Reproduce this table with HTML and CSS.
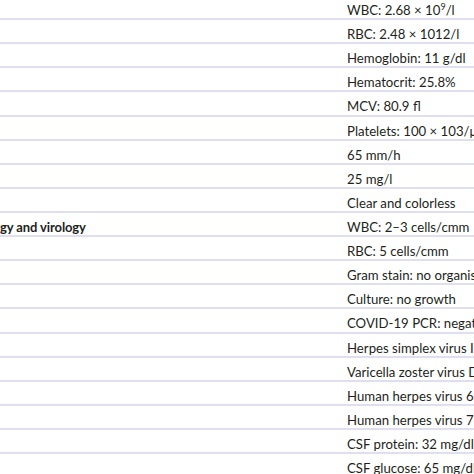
FILE: index.html
```html
<!DOCTYPE html>
<html>
<head>
<meta charset="utf-8">
<link rel="stylesheet" href="styles.css">
</head>
<body>
<div class="table">
  <div class="row"><div class="label"></div><div class="value">WBC: 2.68 × 10<sup>9</sup>/l</div></div>
  <div class="row"><div class="label"></div><div class="value">RBC: 2.48 × 1012/l</div></div>
  <div class="row"><div class="label"></div><div class="value">Hemoglobin: 11 g/dl</div></div>
  <div class="row"><div class="label"></div><div class="value">Hematocrit: 25.8%</div></div>
  <div class="row"><div class="label"></div><div class="value">MCV: 80.9 fl</div></div>
  <div class="row"><div class="label"></div><div class="value">Platelets: 100 × 103/μl</div></div>
  <div class="row"><div class="label"></div><div class="value">65 mm/h</div></div>
  <div class="row"><div class="label"></div><div class="value">25 mg/l</div></div>
  <div class="row"><div class="label"></div><div class="value">Clear and colorless</div></div>
  <div class="row"><div class="label bold">gy and virology</div><div class="value">WBC: 2–3 cells/cmm</div></div>
  <div class="row"><div class="label"></div><div class="value">RBC: 5 cells/cmm</div></div>
  <div class="row"><div class="label"></div><div class="value">Gram stain: no organisms</div></div>
  <div class="row"><div class="label"></div><div class="value">Culture: no growth</div></div>
  <div class="row"><div class="label"></div><div class="value">COVID-19 PCR: negative</div></div>
  <div class="row"><div class="label"></div><div class="value">Herpes simplex virus I/II</div></div>
  <div class="row"><div class="label"></div><div class="value">Varicella zoster virus DNA</div></div>
  <div class="row"><div class="label"></div><div class="value">Human herpes virus 6</div></div>
  <div class="row"><div class="label"></div><div class="value">Human herpes virus 7</div></div>
  <div class="row"><div class="label"></div><div class="value">CSF protein: 32 mg/dl</div></div>
  <div class="row last"><div class="label"></div><div class="value">CSF glucose: 65 mg/dl</div></div>
</div>
</body>
</html>
```

FILE: styles.css
```css
html, body {
  margin: 0;
  padding: 0;
  background: #ffffff;
  overflow: hidden;
  width: 474px;
  height: 474px;
}
.table {
  margin-top: -4px;
  width: 474px;
  font-family: Lato, "Open Sans", sans-serif;
  font-size: 13.2px;
  letter-spacing: 0;
  color: #231f20;
}
.row {
  display: flex;
  box-sizing: border-box;
  height: 24.11px;
  border-bottom: 2px solid #dfdff0;
  overflow: hidden;
}
.row.last {
  border-bottom: none;
}
.label, .value {
  line-height: 22px;
  padding-top: 3px;
  white-space: nowrap;
  overflow: hidden;
}
.label {
  width: 347px;
  flex: none;
}
.value {
  flex: 1;
}
.bold {
  font-weight: 700;
  font-size: 13px;
  letter-spacing: -0.1px;
}
sup {
  font-size: 9px;
  line-height: 0;
  vertical-align: 5px;
}
```
